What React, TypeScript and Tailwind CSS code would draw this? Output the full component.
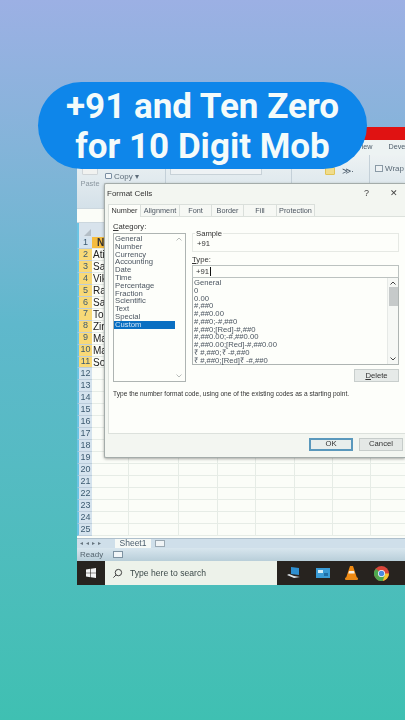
const sans = "font-['Liberation_Sans',Arial,sans-serif]";

const categories = ["General", "Number", "Currency", "Accounting", "Date", "Time", "Percentage", "Fraction", "Scientific", "Text", "Special", "Custom"];
const formats = [
  "General",
  "0",
  "0.00",
  "#,##0",
  "#,##0.00",
  "#,##0;-#,##0",
  "#,##0;[Red]-#,##0",
  "#,##0.00;-#,##0.00",
  "#,##0.00;[Red]-#,##0.00",
  "₹ #,##0;₹ -#,##0",
  "₹ #,##0;[Red]₹ -#,##0",
];
const names = ["N", "Ati", "Saj", "Vik", "Ral", "Sar", "Tor", "Zin", "Ma", "Ma", "Sof"];
const rows = Array.from({ length: 25 }, (_, i) => i + 1);
const tabs = ["Alignment", "Font", "Border", "Fill", "Protection"];

function Chevron({ up, color }: { up?: boolean; color: string }) {
  return (
    <svg width="6" height="4" viewBox="0 0 6 4" fill="none" stroke={color} strokeWidth="1">
      <path d={up ? "M.5 3.5 3 1l2.5 2.5" : "M.5.5 3 3 5.5.5"} />
    </svg>
  );
}

function Row({ n }: { n: number }) {
  const filled = n >= 2 && n <= 11;
  return (
    <div className="flex h-[11.96px] shrink-0">
      <div
        className={`flex w-[15px] shrink-0 items-center justify-center border-b border-b-[#bccddb] border-l-2 border-l-[#6cc4e4] text-[9px] text-[#3c5a70] ${
          filled ? "bg-[#f8d977]" : "bg-[#d5e3ee]"
        }`}
      >
        {n}
      </div>
      <div
        className={`flex w-[37px] shrink-0 items-center border-b border-r border-[#e6ece6] text-[10px] ${
          n === 1 ? "bg-[#f5bc3e] pl-[5px] font-bold text-[#333]" : "pl-px text-[#222]"
        }`}
      >
        {n <= 11 ? names[n - 1] : ""}
      </div>
      {[50, 39, 38, 39, 38, 38].map((w, i) => (
        <div key={i} style={{ width: w }} className="shrink-0 border-b border-r border-[#e6ece6]" />
      ))}
      <div className="flex-1 border-b border-[#e6ece6]" />
    </div>
  );
}

function Ribbon() {
  return (
    <div className="flex h-[53px] shrink-0 bg-gradient-to-b from-[#edf2f3] to-[#d4e1e9] text-[#5c6b78]">
      <div className="flex w-[89px] shrink-0 border-r border-[#c4d0d8]">
        <div className="flex w-[26px] flex-col items-center pt-[10px]">
          <div className="h-[10px] w-[16px] rounded-[1px] border border-[#d0d5d8] bg-[#f1f2f0]" />
          <span className="mt-[3px] text-[7.5px] text-[#8b97a0]">Paste</span>
        </div>
        <div className="flex items-start pl-[2px] pt-[17px] text-[8px] leading-[9px]">
          <span className="mr-[2px] mt-px h-[6px] w-[7px] rounded-[1px] border border-[#7a8ea2] bg-[#f2f6f8]" />
          Copy ▾
        </div>
      </div>
      <div className="flex w-[126px] shrink-0 flex-col gap-[8px] border-r border-[#c4d0d8] px-[4px] pt-[10px]">
        <div className="h-[10px] w-[92px] border border-[#c8d2d8] bg-[#eef2f4]" />
        <div className="ml-[60px] h-[2px] w-[20px] bg-[#aab6bf]" />
      </div>
      <div className="flex w-[78px] shrink-0 gap-[7px] border-r border-[#c4d0d8] pl-[33px] pt-[12px]">
        <div className="h-[8px] w-[10px] rounded-[1px] border border-[#e2c455] bg-[#f0dc8c]" />
        <span className="text-[9px] leading-[8px] text-[#4a5b6a]">≫·</span>
      </div>
      <div className="flex items-start gap-[2px] pl-[5px] pt-[9px] text-[8px] leading-[9px]">
        <span className="mt-px h-[7px] w-[8px] border border-[#8a9aa6] bg-[#eef2f4]" />
        Wrap
      </div>
    </div>
  );
}

function Dialog() {
  return (
    <div className={`absolute left-[27px] top-[56px] flex h-[275px] w-[301px] flex-col rounded-l-[2px] border border-r-0 border-[#a4acaa] bg-[#f3f6f1] pl-[3px] text-[7.7px] leading-[7.8px] text-[#333] shadow-[0_1px_3px_rgba(0,0,0,0.35)] ${sans}`}>
      <div className="flex h-[20px] shrink-0 items-center justify-between pr-[7px] text-[8px]">
        <span className="-ml-[1px]">Format Cells</span>
        <div className="flex items-center gap-[21px] text-[9px] text-[#444]">
          <span>?</span>
          <span>✕</span>
        </div>
      </div>
      <div className="flex h-[12px] shrink-0 items-end text-[7.3px]">
        <div className="z-10 -mb-px flex h-[13px] w-[33px] items-center justify-center border border-b-0 border-[#dadfdb] bg-[#fdfefa]">Number</div>
        {tabs.map((t, i) => (
          <div
            key={t}
            style={{ width: [39, 32, 32, 33, 38][i] }}
            className="flex h-[12px] items-center justify-center border-r border-t border-[#dadfdb] bg-[#f6f8f4] text-[#4b5560]"
          >
            {t}
          </div>
        ))}
      </div>
      <div className="flex h-[218px] shrink-0 flex-col border border-r-0 border-[#dce1dc] bg-[#fdfefa] pl-[4px] pt-[6px]">
        <div className="flex">
          <div className="flex w-[79px] shrink-0 flex-col">
            <span className="h-[7px] text-[7.7px]"><u>C</u>ategory:</span>
            <div className="relative mt-[3px] flex h-[149px] w-[73px] flex-col border border-[#aeb4b2] pt-px">
              {categories.map((c) => (
                <div key={c} className={`h-[7.8px] w-[61px] pl-px ${c === "Custom" ? "bg-[#0a6fc2] text-[#cfe4f6]" : "text-[#4b5560]"}`}>{c}</div>
              ))}
              <span className="absolute right-[3px] top-[3px]"><Chevron up color="#b8bcba" /></span>
              <span className="absolute bottom-[3px] right-[3px]"><Chevron color="#b8bcba" /></span>
            </div>
          </div>
          <div className="flex w-[207px] shrink-0 flex-col">
            <div className="relative mt-[10px] flex h-[19px] items-center border border-[#e6e9e4] pl-[4px] pt-[3px]">
              <span className="absolute -top-[4px] left-[2px] bg-[#fdfefa] px-px">Sample</span>
              +91
            </div>
            <span className="mt-[4px] h-[9px]"><u>T</u>ype:</span>
            <div className="flex h-[13px] items-center border border-[#bcc2c0] pl-[3px]">+91<span className="ml-px h-[9px] w-px bg-[#111]" /></div>
            <div className="relative flex h-[87px] flex-col border border-t-0 border-[#aeb4b2] pl-[1px] pt-[1px] text-[#4b5560]">
              {formats.map((f) => (
                <div key={f} className="h-[7.75px] whitespace-nowrap">{f}</div>
              ))}
              <div className="absolute right-0 top-0 flex h-full w-[11px] flex-col items-center border-l border-[#e6e9e6] bg-[#f6f8f5]">
                <span className="mt-[3px] flex"><Chevron up color="#444" /></span>
                <div className="mt-[2px] h-[19px] w-[9px] bg-[#c6caca]" />
                <span className="mb-[3px] mt-auto flex"><Chevron color="#444" /></span>
              </div>
            </div>
            <div className="mt-[4px] flex h-[13px] w-[45px] items-center justify-center self-end border border-[#c8cecc] bg-[#e6eae8]"><u>D</u>elete</div>
          </div>
        </div>
        <p className="mt-[8px] text-[6.6px] text-[#333]">Type the number format code, using one of the existing codes as a starting point.</p>
      </div>
      <div className="flex flex-1 items-center justify-end gap-[6px] pb-[3px] pr-[2px]">
        <div className="flex h-[13px] w-[44px] items-center justify-center border-2 border-[#5a98bc] bg-[#e8eeec]">OK</div>
        <div className="flex h-[13px] w-[44px] items-center justify-center border border-[#c6ccca] bg-[#e4e8e6]">Cancel</div>
      </div>
    </div>
  );
}

function Taskbar() {
  return (
    <div className="flex h-[24px] shrink-0 items-stretch bg-[#27231f]">
      <div className="flex w-[28px] shrink-0 items-center justify-center">
        <svg width="10" height="10" viewBox="0 0 10 10" fill="#f2f2f2">
          <path d="M0 1.4 4.4.8v3.9H0zM5 .7 10 0v4.7H5zM0 5.3h4.4v3.9L0 8.6zM5 5.3h5V10L5 9.3z" />
        </svg>
      </div>
      <div className={`flex w-[172px] shrink-0 items-center bg-[#edf2ea] pl-[7px] text-[8.6px] text-[#3d4a4a] ${sans}`}>
        <svg width="11" height="11" viewBox="0 0 24 24" fill="none" stroke="#333" strokeWidth="2">
          <circle cx="14" cy="10" r="7" />
          <path d="M9 15 3 21" />
        </svg>
        <span className="ml-[7px]">Type here to search</span>
      </div>
      <div className="flex flex-1 items-center pl-[9px]">
        <svg width="15" height="14" viewBox="0 0 15 14" className="shrink-0">
          <path d="M5 1 13 2V9L5 8z" fill="#2f8fd0" />
          <path d="M1 9 8 12 14 11 8 10 3 8z" fill="#dfe6ea" />
        </svg>
        <svg width="14" height="10" viewBox="0 0 14 10" className="ml-[15px] shrink-0">
          <rect width="14" height="10" fill="#3a9cd6" />
          <rect x="2" y="2" width="5" height="3" fill="#d6eef8" />
          <rect x="8" y="5" width="4" height="3" fill="#1f6ea6" />
        </svg>
        <svg width="13" height="14" viewBox="0 0 13 14" className="ml-[15px] shrink-0">
          <path d="M5 0h3l4 12H1z" fill="#f08a12" />
          <path d="M4 5h5l.7 2.4H3.3z" fill="#f6efe4" />
          <rect y="11.5" width="13" height="2.5" rx="1" fill="#e98a18" />
        </svg>
        <svg width="15" height="15" viewBox="0 0 24 24" className="ml-[16px] shrink-0">
          <circle cx="12" cy="12" r="12" fill="#d8453a" />
          <path d="M12 12 1.6 18A12 12 0 0 1 3 4.2z" fill="#4da84f" />
          <path d="M12 12h12A12 12 0 0 1 14 23.8z" fill="#f5c531" />
          <path d="M12 12 1.6 18A12 12 0 0 0 14 23.8L18 12z" fill="#4da84f" />
          <circle cx="12" cy="12" r="5.6" fill="#fff" />
          <circle cx="12" cy="12" r="4.4" fill="#4a8ae0" />
        </svg>
      </div>
    </div>
  );
}

export default function App() {
  return (
    <div className={`relative flex h-[720px] w-[405px] flex-col overflow-hidden bg-gradient-to-b from-[#9cb0e4] via-[#5fb8cc] via-45% to-[#3fc0b2] pl-[77px] pt-[127px] ${sans}`}>
      <div className="relative flex h-[458px] w-[328px] flex-col overflow-hidden bg-[#fbfdf8] blur-[0.3px]">
        <div className="h-[13px] shrink-0 bg-[#e01212]" />
        <div className="flex h-[15px] shrink-0 items-center bg-[#edf3f3] pl-[280px] text-[7.2px] text-[#4c5c6a]">
          <span>View</span>
          <span className="ml-[16px]">Devel</span>
        </div>
        <Ribbon />
        <div className="h-[15px] shrink-0 border-y border-[#ccd7de] bg-[#fbfdf8]" />
        <div className="flex h-[14px] shrink-0 bg-[#d8e3ec]">
          <div className="flex w-[15px] shrink-0 items-end justify-end border-l-2 border-[#6cc4e4] p-px">
            <span className="h-0 w-0 border-b-[7px] border-l-[7px] border-b-[#b4bec6] border-l-transparent" />
          </div>
        </div>
        <div className="flex flex-1 flex-col overflow-hidden">
          {rows.map((n) => (
            <Row key={n} n={n} />
          ))}
        </div>
        <div className="flex h-[10px] shrink-0 items-center border-t border-[#aebfcc] bg-[#cfdfea] pl-[3px] text-[8.5px] text-[#4a5c6c]">
          <span className="w-[35px] text-[6px] tracking-[3px] text-[#67757f]">◂◂▸▸</span>
          <span className="flex h-full w-[36px] items-center justify-center bg-[#f6f9f6]">Sheet1</span>
          <span className="ml-[4px] h-[7px] w-[10px] border border-[#9aa8b2] bg-[#f0f4f6]" />
        </div>
        <div className="flex h-[13px] shrink-0 items-center bg-gradient-to-b from-[#d8e6ee] to-[#b8ced9] pl-[3px] text-[8px] text-[#55656f]">
          Ready
          <span className="ml-[10px] h-[7px] w-[10px] border border-[#7e93a2] bg-[#f2f6f8]" />
        </div>
        <Taskbar />
        <Dialog />
      </div>
      <div className="absolute left-[38px] top-[82px] flex h-[87px] w-[329px] flex-col items-center justify-center rounded-[44px] bg-[#0e86ea] pt-[3px] font-['Roboto',sans-serif] text-[35px] font-bold leading-[40px] text-[#f4fbfa]">
        <span>+91 and Ten Zero</span>
        <span>for 10 Digit Mob</span>
      </div>
    </div>
  );
}
